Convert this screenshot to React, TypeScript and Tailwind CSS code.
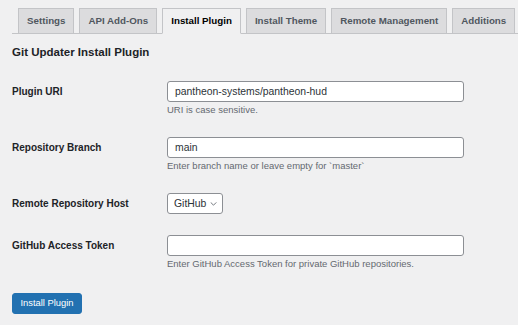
const tabs = [
  { label: 'Settings' },
  { label: 'API Add-Ons' },
  { label: 'Install Plugin', active: true },
  { label: 'Install Theme' },
  { label: 'Remote Management' },
  { label: 'Additions' },
]

function Row({
  label,
  children,
}: {
  label: string
  children: React.ReactNode
}) {
  return (
    <div className="flex items-start">
      <div className="w-[155px] shrink-0 text-[10px] font-bold leading-[21px] text-[#1d2327]">
        {label}
      </div>
      <div className="flex flex-col">{children}</div>
    </div>
  )
}

function TextInput({ value }: { value?: string }) {
  return (
    <div className="flex h-[21px] w-[297px] items-center rounded-[3px] border border-[#8c8f94] bg-white px-[7px] text-[10.4px] text-[#2c3338]">
      {value}
    </div>
  )
}

function Description({ children }: { children: React.ReactNode }) {
  return (
    <p className="mt-[2px] text-[9.5px] leading-[12px] text-[#646970]">
      {children}
    </p>
  )
}

export default function App() {
  return (
    <div
      className="h-[325px] w-[518px] overflow-hidden bg-[#f0f0f1] pl-[12px]"
      style={{ fontFamily: '"Liberation Sans", Arial, sans-serif' }}
    >
      {/* Settings tabs */}
      <nav className="flex h-[34px] items-end gap-[5px] border-b border-[#c3c4c7] pl-[6px]">
        {tabs.map((t) => (
          <div
            key={t.label}
            className={
              t.active
                ? '-mb-px flex h-[26px] items-center border border-b-[#f0f0f1] border-[#c3c4c7] bg-[#f0f0f1] px-[8px] text-[9.75px] font-bold text-black'
                : 'flex h-[25px] items-center border border-b-0 border-[#c3c4c7] bg-[#dcdcde] px-[8px] text-[9.75px] font-bold text-[#50575e]'
            }
          >
            {t.label}
          </div>
        ))}
      </nav>

      <h2 className="mt-[10px] text-[11.5px] font-bold leading-[16px] text-[#1d2327]">
        Git Updater Install Plugin
      </h2>

      <div className="mt-[21px] flex flex-col gap-[21px]">
        <Row label="Plugin URI">
          <TextInput value="pantheon-systems/pantheon-hud" />
          <Description>URI is case sensitive.</Description>
        </Row>
        <Row label="Repository Branch">
          <TextInput value="main" />
          <Description>Enter branch name or leave empty for `master`</Description>
        </Row>
        <Row label="Remote Repository Host">
          <div className="flex h-[21px] w-[56px] items-center justify-between rounded-[3px] border border-[#8c8f94] bg-white pl-[6px] pr-[5px] text-[10.4px] text-[#2c3338]">
            <span>GitHub</span>
            <svg viewBox="0 0 8 5" className="h-[4px] w-[7px]" fill="none" stroke="#50575e" strokeWidth={1}>
              <path d="M0.5 0.5l3.5 3.5 3.5-3.5" />
            </svg>
          </div>
        </Row>
        <Row label="GitHub Access Token">
          <TextInput />
          <Description>Enter GitHub Access Token for private GitHub repositories.</Description>
        </Row>
      </div>

      <button
        type="button"
        className="mt-[23px] flex h-[21px] w-[70px] items-center justify-center rounded-[3px] border border-[#2271b1] bg-[#2271b1] text-[9.4px] text-white"
      >
        Install Plugin
      </button>
    </div>
  )
}
